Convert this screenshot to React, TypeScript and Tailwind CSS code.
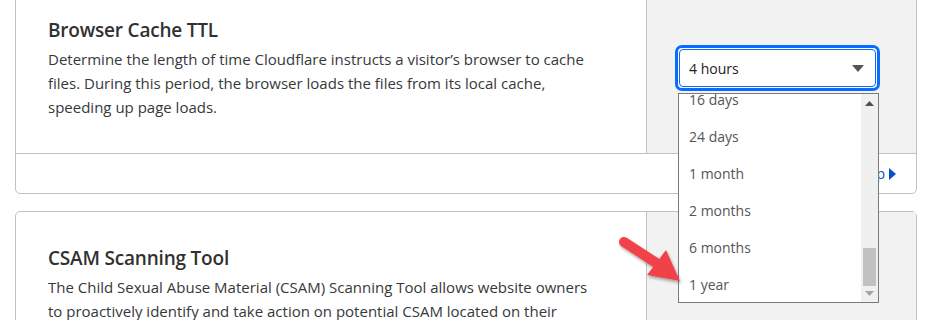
import React from "react"

const OPTIONS = ["16 days", "24 days", "1 month", "2 months", "6 months", "1 year"]

function Caret({ className }: { className?: string }) {
  return (
    <svg className={className} width="12" height="7" viewBox="0 0 12 7">
      <path d="M0 0h12L6 7z" fill="currentColor" />
    </svg>
  )
}

function DropdownList() {
  return (
    <div className="absolute left-[30px] top-[93px] z-20 flex h-[210px] w-[201px] border border-[#7a7a7a] bg-white">
      <ul className="flex-1 overflow-hidden">
        <div className="-mt-[13px]">
          {OPTIONS.map((o) => (
            <li key={o} className="flex h-[37px] items-center pl-[10px] text-[14px] text-[#555]">
              {o}
            </li>
          ))}
        </div>
      </ul>
      <div className="flex w-[17px] flex-col items-center bg-[#f0f0f0]">
        <svg className="mt-[7px]" width="9" height="5" viewBox="0 0 9 5">
          <path d="M0 5h9L4.5 0z" fill="#505050" />
        </svg>
        <div className="flex-1" />
        <div className="h-[38px] w-[13px] bg-[#c1c1c1]" />
        <svg className="mb-[6px] mt-[5px]" width="9" height="5" viewBox="0 0 9 5">
          <path d="M0 0h9L4.5 5z" fill="#a3a3a3" />
        </svg>
      </div>
    </div>
  )
}

function RedArrow() {
  return (
    <svg className="absolute left-[600px] top-[225px] z-30" width="100" height="70" viewBox="600 225 100 70">
      <defs>
        <filter id="sh" x="-20%" y="-20%" width="140%" height="140%">
          <feDropShadow dx="1" dy="2" stdDeviation="1.5" floodColor="#000" floodOpacity="0.35" />
        </filter>
      </defs>
      <g filter="url(#sh)" fill="#f2434a">
        <path d="M624 242 L661 266" stroke="#f2434a" strokeWidth="10" strokeLinecap="round" />
        <path d="M666 250 L647 275 L680 281 z" />
      </g>
    </svg>
  )
}

export default function App() {
  return (
    <div
      className="relative h-[320px] w-[929px] overflow-hidden bg-white text-[#36393a]"
      style={{ fontFamily: "'Open Sans', 'Noto Sans', sans-serif" }}
    >
      <div className="flex flex-col gap-[17px] pl-[15px] pr-[12px]">
        {/* Browser Cache TTL card */}
        <div className="-mt-[18px] rounded-[5px] border border-[#c2c2c2]">
          <div className="flex h-[170px]">
            <div className="flex-1 pl-[32px] pr-[50px] pt-[33px]">
              <h2 className="text-[19px] font-semibold leading-[28px] tracking-[-0.2px] text-[#313131]">
                Browser Cache TTL
              </h2>
              <p className="mt-[3px] text-[15px] leading-[24px]">
                Determine the length of time Cloudflare instructs a visitor’s browser to cache files. During this period,
                the browser loads the files from its local cache, speeding up page loads.
              </p>
            </div>
            <div className="relative w-[270px] border-l border-[#c2c2c2] bg-[#f2f2f2] pl-[28px] pt-[62px]">
              <div className="w-[205px] rounded-[7px] border-[3px] border-[#0a6cff] bg-white p-[1px]">
                <div className="flex h-[38px] items-center justify-between rounded-[4px] border border-[#0a6cff] pl-[9px] pr-[11px]">
                  <span className="text-[14px] text-[#222]">4 hours</span>
                  <Caret className="text-[#555]" />
                </div>
              </div>
            </div>
          </div>
          <div className="flex h-[40px] items-center justify-end border-t border-[#c2c2c2] pr-[20px]">
            <span className="text-[14px] text-[#0051c3]">Help</span>
            <svg className="ml-[4px]" width="7" height="12" viewBox="0 0 7 12">
              <path d="M0 0v12l7-6z" fill="#0051c3" />
            </svg>
          </div>
        </div>

        {/* CSAM card */}
        <div className="flex h-[200px] rounded-t-[5px] border border-[#c2c2c2]">
          <div className="flex-1 pl-[32px] pr-[50px] pt-[32px]">
            <h2 className="text-[19px] font-semibold leading-[28px] tracking-[-0.2px] text-[#313131]">
              CSAM Scanning Tool
            </h2>
            <p className="mt-[3px] text-[15px] leading-[24px]">
              The Child Sexual Abuse Material (CSAM) Scanning Tool allows website owners to proactively identify and take
              action on potential CSAM located on their website.
            </p>
          </div>
          <div className="w-[270px] border-l border-[#c2c2c2] bg-[#f2f2f2]" />
        </div>
      </div>

      <div className="absolute left-[648px] top-0 z-20">
        <DropdownList />
      </div>
      <RedArrow />
    </div>
  )
}
